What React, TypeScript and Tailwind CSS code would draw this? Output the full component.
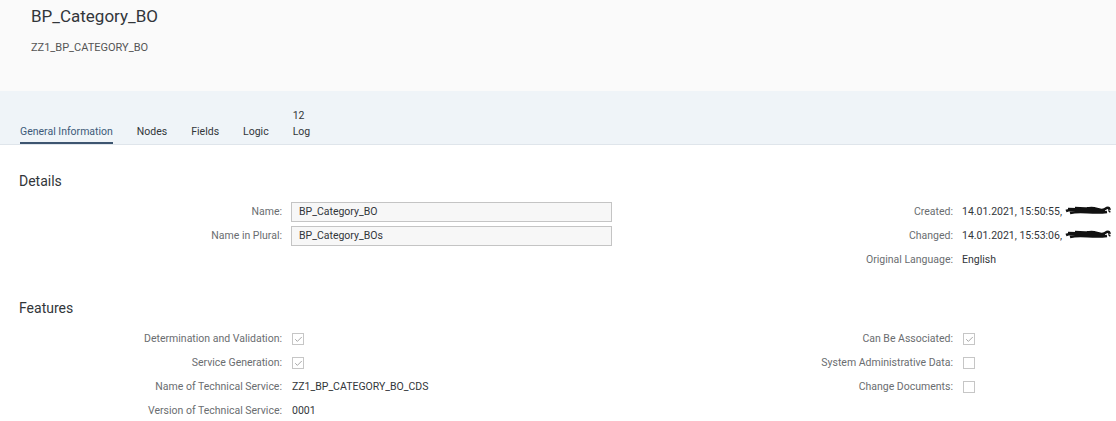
import { Check } from "lucide-react";

const font = { fontFamily: 'Roboto, "Liberation Sans", Arial, sans-serif' };

const labelCls = "text-right text-[10.5px] text-[#6a6d70] leading-[24px] whitespace-nowrap";
const valueCls = "text-[10.5px] text-[#32363a] leading-[24px] whitespace-nowrap";

const Scribble = () => (
  <svg width="46" height="10" viewBox="0 0 46 10" className="inline-block align-middle -mt-[2px]">
    <path
      d="M1 5 C8 2 14 7 22 3 S34 7 40 3 S44 6 45 5 M3 3 L40 4 M5 7 C16 4 26 8 42 6 M10 2 L30 3 M14 5 C22 2 30 8 38 4 M8 6 L36 6"
      stroke="#111"
      strokeWidth="2.6"
      fill="none"
    />
  </svg>
);

const Box = ({ checked }: { checked: boolean }) => (
  <span className="inline-flex w-[12px] h-[12px] border border-[#c6c6c6] bg-white items-center justify-center align-middle">
    {checked && <Check size={9} strokeWidth={2} color="#8a8a8a" />}
  </span>
);

const Field = ({ value }: { value: string }) => (
  <div className="w-[321px] h-[20px] my-[2px] border border-[#c4c4c4] bg-[#f7f7f7] px-[7px] text-[10.5px] text-[#32363a] leading-[18px]">
    {value}
  </div>
);

const tabs = ["General Information", "Nodes", "Fields", "Logic"];

export default function App() {
  return (
    <div className="w-[1116px] h-[421px] bg-white overflow-hidden" style={font}>
      <div className="h-[91px] bg-[#fafafa] px-[31px] pt-[5px]">
        <h1 className="text-[17px] text-[#32363a] leading-[22px]">BP_Category_BO</h1>
        <div className="mt-[15px] text-[11px] text-[#555] leading-[12px]">ZZ1_BP_CATEGORY_BO</div>
      </div>

      <div className="h-[54px] bg-[#eff4f8] border-b border-[#dfe5eb] flex items-end px-[20px]">
        <div className="flex gap-[24px] items-end">
          {tabs.map((t, i) => (
            <div
              key={t}
              className={
                i === 0
                  ? "border-b-2 border-[#3d5570] text-[10.5px] text-[#3d5a78] leading-[20px]"
                  : "pb-[2px] text-[10.5px] text-[#32363a] leading-[20px]"
              }
            >
              {t}
            </div>
          ))}
          <div className="pb-[2px] flex flex-col text-[10.5px] text-[#32363a]">
            <span className="leading-[12px]">12</span>
            <span className="leading-[20px]">Log</span>
          </div>
        </div>
      </div>

      <div className="px-[19px] pt-[27px]">
        <h2 className="text-[14px] text-[#32363a] leading-[18px]">Details</h2>
      </div>
      <div className="flex mt-[10px]">
        <div className="w-[620px] grid grid-cols-[282px_auto] gap-x-[9px] content-start">
          <div className={labelCls}>Name:</div>
          <Field value="BP_Category_BO" />
          <div className={labelCls}>Name in Plural:</div>
          <Field value="BP_Category_BOs" />
        </div>
        <div className="grid grid-cols-[333px_auto] gap-x-[9px] content-start">
          <div className={labelCls}>Created:</div>
          <div className={valueCls}>
            14.01.2021, 15:50:55, <Scribble />
          </div>
          <div className={labelCls}>Changed:</div>
          <div className={valueCls}>
            14.01.2021, 15:53:06, <Scribble />
          </div>
          <div className={labelCls}>Original Language:</div>
          <div className={valueCls}>English</div>
        </div>
      </div>

      <div className="px-[19px] pt-[27px]">
        <h2 className="text-[14px] text-[#32363a] leading-[18px]">Features</h2>
      </div>
      <div className="flex mt-[10px]">
        <div className="w-[620px] grid grid-cols-[282px_auto] gap-x-[10px] content-start">
          <div className={labelCls}>Determination and Validation:</div>
          <div className={valueCls}>
            <Box checked />
          </div>
          <div className={labelCls}>Service Generation:</div>
          <div className={valueCls}>
            <Box checked />
          </div>
          <div className={labelCls}>Name of Technical Service:</div>
          <div className={valueCls}>ZZ1_BP_CATEGORY_BO_CDS</div>
          <div className={labelCls}>Version of Technical Service:</div>
          <div className={valueCls}>0001</div>
        </div>
        <div className="grid grid-cols-[333px_auto] gap-x-[10px] content-start">
          <div className={labelCls}>Can Be Associated:</div>
          <div className={valueCls}>
            <Box checked />
          </div>
          <div className={labelCls}>System Administrative Data:</div>
          <div className={valueCls}>
            <Box checked={false} />
          </div>
          <div className={labelCls}>Change Documents:</div>
          <div className={valueCls}>
            <Box checked={false} />
          </div>
        </div>
      </div>
    </div>
  );
}
